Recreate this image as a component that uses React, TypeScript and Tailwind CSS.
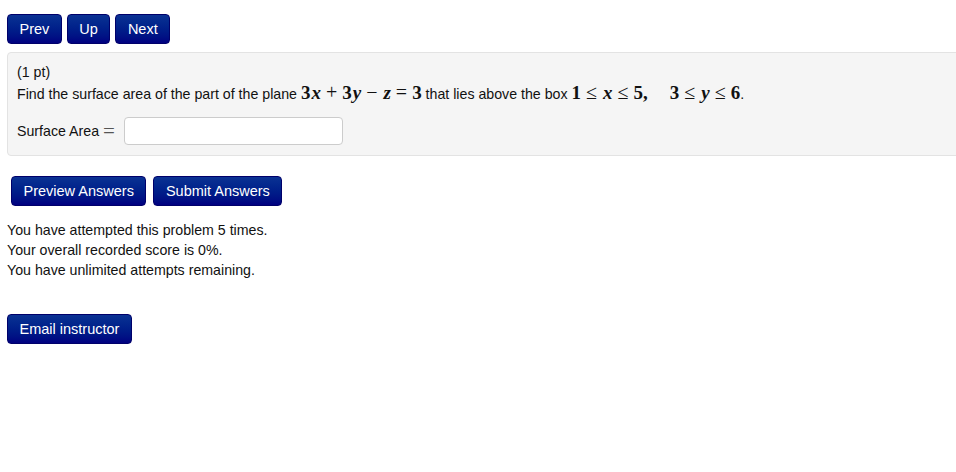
import * as React from 'react'

const btn =
  'inline-flex items-center h-[30px] px-[11.5px] rounded-[4px] border border-[#00006a] bg-gradient-to-b from-[#0b3293] to-[#000080] text-white text-[14.5px] leading-none'

function M({ children }: { children: React.ReactNode }) {
  return (
    <span className="font-['Liberation_Serif','DejaVu_Serif',serif] text-[19px] font-bold whitespace-nowrap leading-none">
      {children}
    </span>
  )
}

function V({ children }: { children: React.ReactNode }) {
  return <i className="font-semibold ml-[1px]">{children}</i>
}

function Op({ children }: { children: React.ReactNode }) {
  return <span className="font-normal text-[20px] mx-[5px]">{children}</span>
}

export default function App() {
  return (
    <div className="w-[956px] h-[472px] overflow-hidden bg-white text-[#111] font-['Liberation_Sans',Arial,sans-serif] text-[14.2px]">
      <div className="flex gap-[5px] pl-[7px] pt-[14px]">
        <button className={btn}>Prev</button>
        <button className={btn}>Up</button>
        <button className={btn}>Next</button>
      </div>

      <div className="ml-[7px] mt-[8px] w-[1000px] bg-[#f5f5f5] border border-[#e3e3e3] rounded-[4px] pl-[9px] pt-[9px] pb-[10px] leading-[20px]">
        <div>(1 pt)</div>
        <div className="h-[20px] whitespace-nowrap">
          Find the surface area of the part of the plane{' '}
          <M>
            3<V>x</V>
            <Op>+</Op>3<V>y</V>
            <Op>−</Op>
            <V>z</V>
            <Op>=</Op>3
          </M>{' '}
          that lies above the box{' '}
          <M>
            1<Op>≤</Op>
            <V>x</V>
            <Op>≤</Op>5,<span className="inline-block w-[22px]" />3<Op>≤</Op>
            <V>y</V>
            <Op>≤</Op>6
          </M>
          .
        </div>
        <div className="flex items-center mt-[15px]">
          <span>Surface Area</span>
          <span className="font-['Liberation_Serif',serif] text-[21px] leading-none text-[#555] ml-[4px]">=</span>
          <input
            type="text"
            className="ml-[9px] w-[219px] h-[28px] bg-white border border-[#cccccc] rounded-[4px] outline-none"
          />
        </div>
      </div>

      <div className="flex gap-[7px] pl-[11px] mt-[20px]">
        <button className={btn}>Preview Answers</button>
        <button className={btn}>Submit Answers</button>
      </div>

      <div className="pl-[7px] mt-[14px] leading-[20px]">
        <div>You have attempted this problem 5 times.</div>
        <div>Your overall recorded score is 0%.</div>
        <div>You have unlimited attempts remaining.</div>
      </div>

      <div className="pl-[7px] mt-[34px]">
        <button className={btn}>Email instructor</button>
      </div>
    </div>
  )
}
